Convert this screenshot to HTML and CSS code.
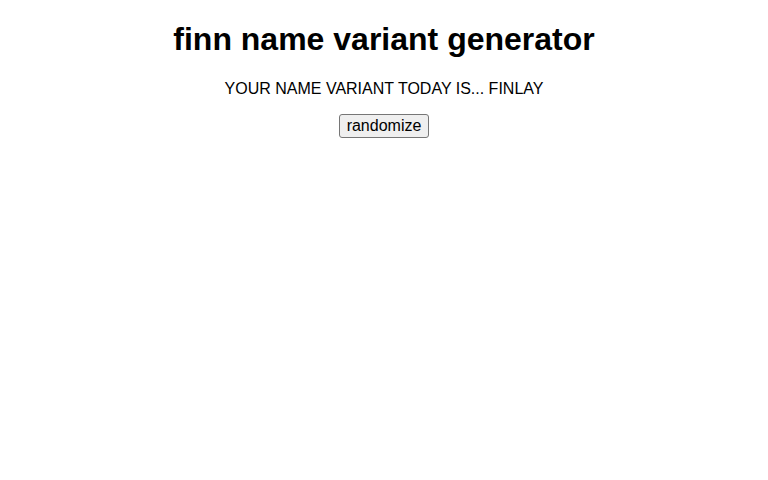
FILE: index.html
```html
<!DOCTYPE html>
<html>
<head>
<meta charset="utf-8">
<link rel="stylesheet" href="styles.css">
</head>
<body>
<h1 class="title">finn name variant generator</h1>
<p class="result">YOUR NAME VARIANT TODAY IS... FINLAY</p>
<div class="actions"><button class="btn">randomize</button></div>
</body>
</html>
```
FILE: styles.css
```css
html, body {
  margin: 0;
  padding: 0;
}
body {
  font-family: "Liberation Sans", Arial, sans-serif;
  text-align: center;
  color: #000;
  background: #fff;
}
.title {
  font-size: 32px;
  font-weight: bold;
  margin: 21.44px 0;
}
.result {
  font-size: 16px;
  margin: 16px 0;
}
.actions {
  margin: 16px 0;
}
.btn {
  font-family: "Liberation Sans", Arial, sans-serif;
  font-size: 16px;
  padding: 2px 7px;
  background: #efefef;
  border: 1px solid #767676;
  border-radius: 3px;
  color: #000;
}
```
